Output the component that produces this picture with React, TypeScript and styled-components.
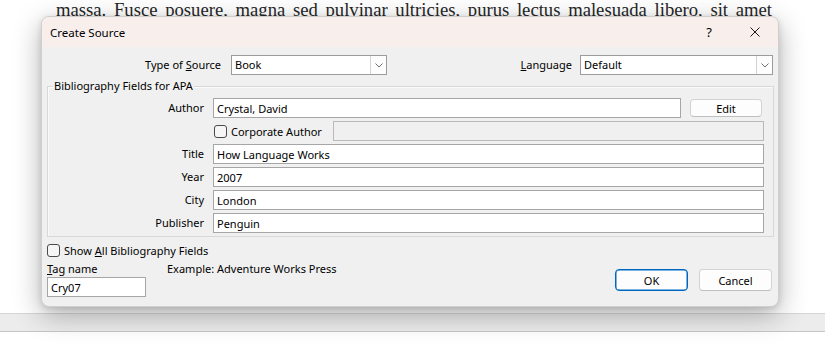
import React from 'react';
import styled, { createGlobalStyle } from 'styled-components';

const GlobalStyle = createGlobalStyle`
  * { box-sizing: border-box; }
  body {
    margin: 0;
    background: #ffffff;
    font-family: "Noto Sans", "Open Sans", sans-serif;
  }
`;

const UI_FONT = `"Noto Sans", "Open Sans", sans-serif`;
const UI_SIZE = '11px';

const Page = styled.div`
  position: relative;
  width: 825px;
  height: 346px;
  overflow: hidden;
  background: #ffffff;
`;

const DocLine = styled.p`
  margin: 0;
  padding: 0 53px 0 56px;
  height: 20px;
  font-family: "Liberation Serif", "Times New Roman", serif;
  font-size: 18.67px;
  line-height: 20px;
  color: #262626;
  text-align: justify;
  text-align-last: justify;
`;

const PageEdge = styled.div`
  margin-top: 293px;
  height: 19px;
  background: #ececec;
  border-top: 1px solid #d6d6d6;
  border-bottom: 1px solid #c6c6c6;
`;

// the dialog floats over the document, like a window
const Dialog = styled.div`
  position: absolute;
  left: 41px;
  top: 16px;
  width: 738px;
  height: 291px;
  background: #f0f0f0;
  border: 1px solid #cfcfcf;
  border-radius: 8px;
  overflow: hidden;
  box-shadow: 0 8px 28px rgba(0, 0, 0, 0.3), 0 2px 6px rgba(0, 0, 0, 0.12);
  font-family: ${UI_FONT};
  font-size: ${UI_SIZE};
  color: #000;
  display: flex;
  flex-direction: column;
`;

const TitleBar = styled.div`
  height: 30px;
  flex-shrink: 0;
  display: flex;
  align-items: center;
  background: #f8efed;
  padding-left: 8px;
`;

const Title = styled.span`
  flex: 1;
  font-size: 11.5px;
`;

const CaptionButton = styled.div`
  width: 46px;
  height: 30px;
  display: flex;
  align-items: center;
  justify-content: center;
  font-size: 13px;
`;

const Body = styled.div`
  flex: 1;
  display: flex;
  flex-direction: column;
  padding: 8px 4px 9px 5px;
`;

const TopRow = styled.div`
  display: flex;
  align-items: center;
  height: 20px;
  padding-right: 1px;
`;

const Label = styled.span<{ $width?: number; $gap?: number; $push?: boolean }>`
  ${(p) => (p.$width ? `width: ${p.$width}px;` : '')}
  ${(p) => (p.$push ? 'margin-left: auto;' : '')}
  margin-right: ${(p) => p.$gap ?? 0}px;
  text-align: right;
  white-space: nowrap;
  line-height: 16px;
`;

const Combo = styled.div<{ $width: number }>`
  width: ${(p) => p.$width}px;
  height: 20px;
  display: flex;
  background: #fff;
  border: 1px solid #9c9c9c;
`;

const ComboValue = styled.span`
  flex: 1;
  padding-left: 3px;
  line-height: 18px;
`;

const ComboButton = styled.span`
  width: 16px;
  display: flex;
  align-items: center;
  justify-content: center;
  border-left: 1px solid #d4d4d4;
  background: #fdfdfd;
`;

const GroupBox = styled.fieldset`
  margin: 3px 0 0 0;
  padding: 0;
  min-width: 0;
  border: 1px solid #d8d8d8;
  box-shadow: inset 1px 1px 0 #fafafa;
`;

const GroupTitle = styled.legend`
  margin-left: 5px;
  padding: 0 1px;
  line-height: 16px;
`;

const FieldGrid = styled.div`
  display: grid;
  grid-template-columns: 150px 1fr;
  grid-auto-rows: 20px;
  column-gap: 9px;
  row-gap: 3px;
  padding: 4px 9px 3px 6px;
`;

const FieldLabel = styled.span`
  text-align: right;
  line-height: 20px;
  white-space: nowrap;
`;

const Line = styled.div`
  display: flex;
  align-items: center;
`;

const TextBox = styled.input<{ $width?: number }>`
  ${(p) => (p.$width ? `width: ${p.$width}px;` : 'flex: 1; width: 100%; min-width: 0;')}
  height: 20px;
  margin: 0;
  padding: 0 3px;
  font-family: ${UI_FONT};
  font-size: ${UI_SIZE};
  color: #000;
  background: #fff;
  border: 1px solid #a6a6a6;
  border-radius: 0;
  outline: none;
  &:disabled {
    background: #f0f0f0;
    border-color: #b9b9b9;
  }
`;

const PushButton = styled.button<{ $default?: boolean; $width: number; $height: number }>`
  width: ${(p) => p.$width}px;
  height: ${(p) => p.$height}px;
  margin: 0;
  padding: 0;
  font-family: ${UI_FONT};
  font-size: ${UI_SIZE};
  color: #000;
  background: #fdfdfd;
  border-radius: 4px;
  border: 1px solid ${(p) => (p.$default ? '#0067c0' : '#d3d3d3')};
  border-bottom-color: ${(p) => (p.$default ? '#0067c0' : '#bfbfbf')};
  box-shadow: ${(p) => (p.$default ? 'inset 0 0 0 0.5px #0067c0' : 'none')};
`;

const CheckLine = styled.label<{ $width?: number }>`
  display: flex;
  align-items: center;
  height: 16px;
  ${(p) => (p.$width ? `width: ${p.$width}px; flex-shrink: 0;` : '')}
  white-space: nowrap;
`;

const CheckBox = styled.span<{ $offset?: number }>`
  width: 13px;
  height: 13px;
  margin-left: ${(p) => p.$offset ?? 0}px;
  margin-right: 4px;
  border: 1px solid #4a4a4a;
  border-radius: 3px;
  background: #f6f6f6;
  flex-shrink: 0;
`;

const Footer = styled.div`
  display: flex;
  justify-content: space-between;
  align-items: flex-end;
  margin-top: 5px;
`;

const FooterLeft = styled.div`
  display: flex;
  flex-direction: column;
`;

const TagRow = styled.div`
  display: grid;
  grid-template-columns: 120px auto;
  margin-top: 3px;
  line-height: 16px;
`;

const TagField = styled.div`
  display: flex;
`;

const ButtonRow = styled.div`
  display: flex;
  gap: 11px;
  margin: 0 2px 6px 0;
`;

const Chevron = () => (
  <svg width="8" height="5" viewBox="0 0 8 5">
    <path d="M0.5 0.5 L4 4 L7.5 0.5" fill="none" stroke="#6e6e6e" strokeWidth="1" />
  </svg>
);

const CloseGlyph = () => (
  <svg width="10" height="10" viewBox="0 0 10 10">
    <path d="M0.5 0.5 L9.5 9.5 M9.5 0.5 L0.5 9.5" stroke="#1a1a1a" strokeWidth="1" />
  </svg>
);

const fields = [
  { label: 'Title', value: 'How Language Works' },
  { label: 'Year', value: '2007' },
  { label: 'City', value: 'London' },
  { label: 'Publisher', value: 'Penguin' },
];

const App = () => {
  return (
    <>
      <GlobalStyle />
      <Page>
        <DocLine>
          massa. Fusce posuere, magna sed pulvinar ultricies, purus lectus malesuada libero, sit amet
        </DocLine>
        <PageEdge />

        <Dialog>
          <TitleBar>
            <Title>Create Source</Title>
            <CaptionButton>?</CaptionButton>
            <CaptionButton>
              <CloseGlyph />
            </CaptionButton>
          </TitleBar>

          <Body>
            <TopRow>
              <Label $width={174} $gap={10}>
                Type of <u>S</u>ource
              </Label>
              <Combo $width={156}>
                <ComboValue>Book</ComboValue>
                <ComboButton>
                  <Chevron />
                </ComboButton>
              </Combo>
              <Label $push $gap={8}>
                <u>L</u>anguage
              </Label>
              <Combo $width={193}>
                <ComboValue>Default</ComboValue>
                <ComboButton>
                  <Chevron />
                </ComboButton>
              </Combo>
            </TopRow>

            <GroupBox>
              <GroupTitle>Bibliography Fields for APA</GroupTitle>
              <FieldGrid>
                <FieldLabel>Author</FieldLabel>
                <Line>
                  <TextBox readOnly value="Crystal, David" />
                  <PushButton $width={72} $height={18} style={{ marginLeft: 9, marginRight: 2 }}>
                    Edit
                  </PushButton>
                </Line>

                <span />
                <Line>
                  <CheckLine $width={120}>
                    <CheckBox $offset={1} />
                    <span>Corporate Author</span>
                  </CheckLine>
                  <TextBox disabled value="" readOnly />
                </Line>

                {fields.map((f) => (
                  <React.Fragment key={f.label}>
                    <FieldLabel>{f.label}</FieldLabel>
                    <Line>
                      <TextBox readOnly value={f.value} />
                    </Line>
                  </React.Fragment>
                ))}
              </FieldGrid>
            </GroupBox>

            <Footer>
              <FooterLeft>
                <CheckLine>
                  <CheckBox />
                  <span>
                    Show <u>A</u>ll Bibliography Fields
                  </span>
                </CheckLine>
                <TagRow>
                  <span>
                    <u>T</u>ag name
                  </span>
                  <span>Example: Adventure Works Press</span>
                </TagRow>
                <TagField>
                  <TextBox $width={99} readOnly value="Cry07" />
                </TagField>
              </FooterLeft>
              <ButtonRow>
                <PushButton $default $width={73} $height={22}>
                  OK
                </PushButton>
                <PushButton $width={73} $height={22}>
                  Cancel
                </PushButton>
              </ButtonRow>
            </Footer>
          </Body>
        </Dialog>
      </Page>
    </>
  );
};

export default App;
